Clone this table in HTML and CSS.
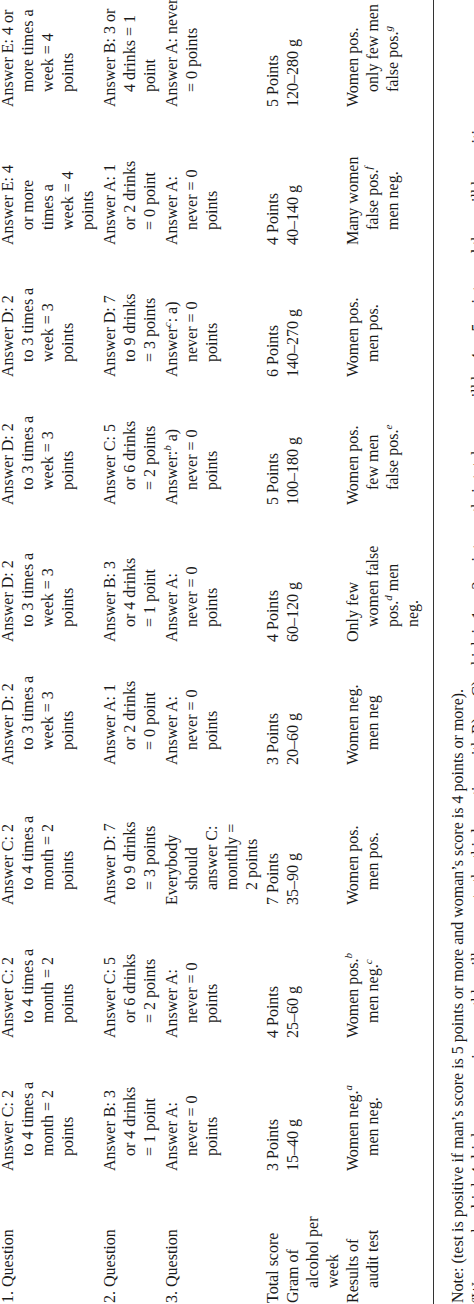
FILE: index.html
```html
<!DOCTYPE html>
<html lang="en">
<head>
<meta charset="utf-8">
<title>Audit test table</title>
<link rel="stylesheet" href="styles.css">
</head>
<body>
<div class="page">
  <table class="data">
    <colgroup>
      <col class="c-label"><col class="c-1"><col class="c-2"><col class="c-3"><col class="c-4"><col class="c-5"><col class="c-6"><col class="c-7"><col class="c-8"><col class="c-9">
    </colgroup>
    <tbody>
      <tr class="r1">
        <td>1. Question</td>
        <td>Answer C: 2 to 4 times a month = 2 points</td>
        <td>Answer C: 2 to 4 times a month = 2 points</td>
        <td>Answer C: 2 to 4 times a month = 2 points</td>
        <td>Answer D: 2 to 3 times a week = 3 points</td>
        <td>Answer D: 2 to 3 times a week = 3 points</td>
        <td>Answer D: 2 to 3 times a week = 3 points</td>
        <td>Answer D: 2 to 3 times a week = 3 points</td>
        <td>Answer E: 4 or more times a week = 4 points</td>
        <td>Answer E: 4 or more times a week = 4 points</td>
      </tr>
      <tr class="r2">
        <td>2. Question</td>
        <td>Answer B: 3 or 4 drinks = 1 point</td>
        <td>Answer C: 5 or 6 drinks = 2 points</td>
        <td>Answer D: 7 to 9 drinks = 3 points</td>
        <td>Answer A: 1 or 2 drinks = 0 point</td>
        <td>Answer B: 3 or 4 drinks = 1 point</td>
        <td>Answer C: 5 or 6 drinks = 2 points</td>
        <td>Answer D: 7 to 9 drinks = 3 points</td>
        <td>Answer A: 1 or 2 drinks = 0 point</td>
        <td>Answer B: 3 or 4 drinks = 1 point</td>
      </tr>
      <tr class="r3">
        <td>3. Question</td>
        <td>Answer A: never = 0 points</td>
        <td>Answer A: never = 0 points</td>
        <td>Everybody should answer C: monthly = 2 points</td>
        <td>Answer A: never = 0 points</td>
        <td>Answer A: never = 0 points</td>
        <td>Answer:<sup>b</sup> a) never = 0 points</td>
        <td>Answer<sup>c</sup>: a) never = 0 points</td>
        <td>Answer A: never = 0 points</td>
        <td>Answer A: never = 0 points</td>
      </tr>
      <tr class="r4">
        <td>Total score</td>
        <td>3 Points</td>
        <td>4 Points</td>
        <td>7 Points</td>
        <td>3 Points</td>
        <td>4 Points</td>
        <td>5 Points</td>
        <td>6 Points</td>
        <td>4 Points</td>
        <td>5 Points</td>
      </tr>
      <tr class="r5">
        <td>Gram of alcohol per week</td>
        <td>15–40 g</td>
        <td>25–60 g</td>
        <td>35–90 g</td>
        <td>20–60 g</td>
        <td>60–120 g</td>
        <td>100–180 g</td>
        <td>140–270 g</td>
        <td>40–140 g</td>
        <td>120–280 g</td>
      </tr>
      <tr class="r6">
        <td>Results of audit test</td>
        <td>Women neg.<sup>a</sup> men neg.</td>
        <td>Women pos.<sup>b</sup> men neg.<sup>c</sup></td>
        <td>Women pos. men pos.</td>
        <td>Women neg. men neg</td>
        <td>Only few women false pos.<sup>d</sup> men neg.</td>
        <td>Women pos. few men false pos.<sup>e</sup></td>
        <td>Women pos. men pos.</td>
        <td>Many women false pos.<sup>f</sup> men neg.</td>
        <td>Women pos. only few men false pos.<sup>g</sup></td>
      </tr>
    </tbody>
  </table>
  <div class="rule"></div>
  <p class="note">Note: (test is positive if man’s score is 5 points or more and woman’s score is 4 points or more).</p>
  <p class="note"><sup>a</sup>Women who drink 4 drinks per occasion monthly will answer to the third question with B) or C) which is 1 or 2 points, so their total score will be 4 or 5 points, and they will be positive</p>
</div>
</body>
</html>
```

FILE: styles.css
```css
html, body {
  margin: 0;
  padding: 0;
  width: 474px;
  height: 1304px;
  overflow: hidden;
  background: #ffffff;
}

.page {
  width: 1304px;
  height: 474px;
  box-sizing: border-box;
  padding-left: 1px;
  overflow: hidden;
  transform-origin: 0 0;
  transform: translateY(1304px) rotate(-90deg);
  font-family: "Liberation Serif", "Times New Roman", serif;
  font-size: 16px;
  line-height: 20px;
  color: #1a1a1a;
  background: #ffffff;
}

.data {
  border-collapse: collapse;
  table-layout: fixed;
  width: 1350px;
  margin-top: -2px;
}

.c-label { width: 132px; }
.c-1 { width: 133px; }
.c-2 { width: 133px; }
.c-3 { width: 140px; }
.c-4 { width: 123px; }
.c-5 { width: 137px; }
.c-6 { width: 128px; }
.c-7 { width: 132px; }
.c-8 { width: 138px; }
.c-9 { width: 154px; }

.data td {
  vertical-align: top;
  text-align: left;
  padding: 0 38px 0 15px;
  text-indent: -15px;
}

.data td:nth-child(1) { padding-right: 42px; }
.data td:nth-child(2) { padding-right: 39px; }
.data td:nth-child(3) { padding-right: 39px; }
.data td:nth-child(4) { padding-right: 49px; }
.data td:nth-child(5) { padding-right: 29px; }
.data td:nth-child(6) { padding-right: 40px; }
.data td:nth-child(7) { padding-right: 34px; }
.data td:nth-child(8) { padding-right: 38px; }
.data td:nth-child(9) { padding-right: 44px; }
.data td:nth-child(10) { padding-right: 44px; }

.r2 td { padding-top: 2px; }
.r3 td { padding-top: 2px; }
.r4 td { padding-top: 1px; }

sup {
  font-size: 11px;
  font-style: italic;
  line-height: 0;
  vertical-align: 6px;
}

.rule {
  height: 1px;
  background: #333333;
  margin-top: 10px;
  width: 1304px;
  margin-left: -1px;
}

.note {
  margin: 0;
  white-space: nowrap;
}

.rule + .note {
  margin-top: 14px;
}
```
